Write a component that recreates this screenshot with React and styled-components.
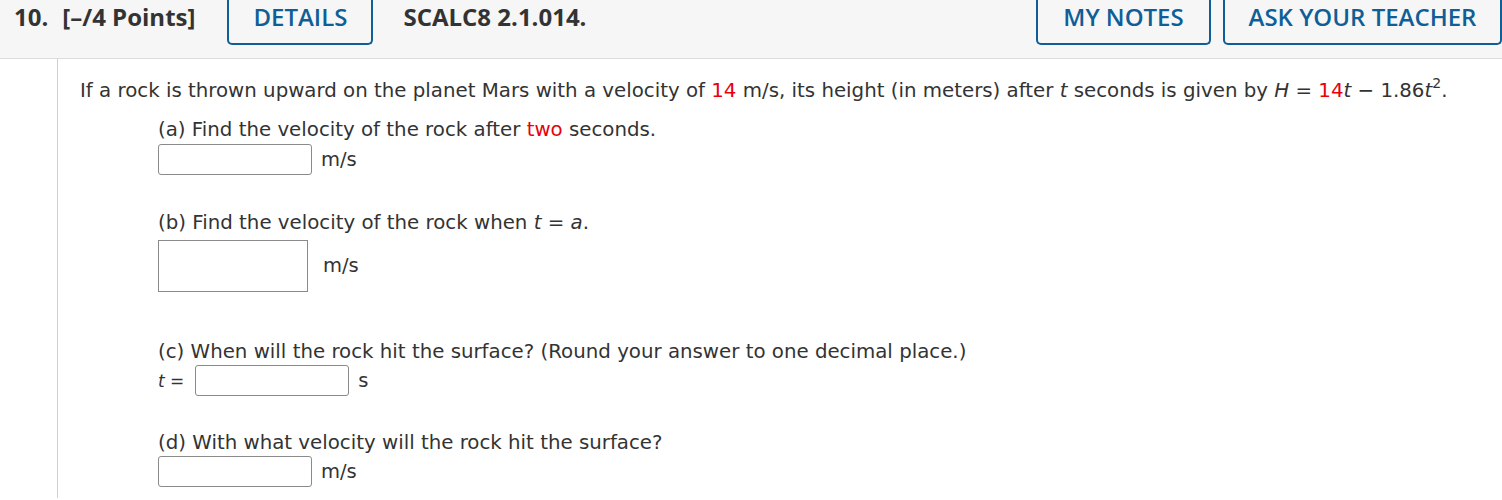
import React from "react";
import styled, { createGlobalStyle } from "styled-components";

const Global = createGlobalStyle`
  html, body { margin: 0; padding: 0; background: #fff; }
  body { font-family: "DejaVu Sans", Verdana, sans-serif; color: #333; }
`;

const Header = styled.header`
  display: flex;
  align-items: flex-start;
  height: 59px;
  background: #f6f6f6;
  border-bottom: 1px solid #dcdcdc;
  font-family: "Open Sans", "Liberation Sans", sans-serif;
  font-size: 24px;
  color: #333;
  box-sizing: border-box;
`;

const HeadText = styled.span`
  font-weight: ${(p) => p.$weight || 700};
  line-height: 34px;
  margin-left: ${(p) => p.$ml || 0}px;
  white-space: nowrap;
`;

const HeadButton = styled.div`
  box-sizing: border-box;
  width: ${(p) => p.$w}px;
  height: 45px;
  margin-left: ${(p) => p.$ml || 0}px;
  border: 2px solid #0f5f96;
  border-top: none;
  border-radius: 0 0 5px 5px;
  color: #0f5f96;
  font-weight: 600;
  text-align: center;
  line-height: 34px;
  white-space: nowrap;
`;

const Spacer = styled.div`
  flex: 1;
`;

const Body = styled.main`
  margin-left: 57px;
  border-left: 1px solid #d0d0d0;
  padding: 20px 0 11px 22px;
  font-size: 19.8px;
  line-height: 24px;
`;

const Para = styled.div`
  margin-top: ${(p) => p.$mt || 0}px;
  margin-left: ${(p) => p.$ml || 0}px;
  white-space: nowrap;
`;

const Red = styled.span`
  color: #e8000b;
`;

const I = styled.i`
  font-style: italic;
`;

const Sup = styled.sup`
  font-size: 14px;
  line-height: 0;
  vertical-align: 9px;
`;

const AnswerRow = styled.div`
  display: flex;
  align-items: center;
  gap: ${(p) => p.$gap || 9}px;
  margin-left: 78px;
  margin-top: ${(p) => p.$mt || 0}px;
`;

const Box = styled.div`
  box-sizing: border-box;
  width: ${(p) => p.$w || 154}px;
  height: ${(p) => p.$h || 31}px;
  border: 1px solid #8a8a8a;
  border-radius: ${(p) => (p.$square ? 0 : 3)}px;
  background: #fff;
`;

const Unit = styled.span`
  font-size: 19.5px;
  color: #333;
`;

const Label = styled.span`
  font-size: 17px;
  color: #333;
  margin-right: 2px;
`;

export default function App() {
  return (
    <>
      <Global />
      <Header>
        <HeadText $ml={14}>10.</HeadText>
        <HeadText $ml={14}>[–/4 Points]</HeadText>
        <HeadButton $w={146} $ml={32}>DETAILS</HeadButton>
        <HeadText $ml={30}>SCALC8 2.1.014.</HeadText>
        <Spacer />
        <HeadButton $w={175}>MY NOTES</HeadButton>
        <HeadButton $w={279} $ml={12}>ASK YOUR TEACHER</HeadButton>
      </Header>
      <Body>
        <Para>
          If a rock is thrown upward on the planet Mars with a velocity of <Red>14</Red> m/s, its height (in meters) after <I>t</I> seconds is given by <I>H</I> = <Red>14</Red><I>t</I> − 1.86<I>t</I><Sup>2</Sup>.
        </Para>
        <Para $ml={78} $mt={15}>
          (a) Find the velocity of the rock after <Red>two</Red> seconds.
        </Para>
        <AnswerRow $mt={2}>
          <Box />
          <Unit>m/s</Unit>
        </AnswerRow>
        <Para $ml={78} $mt={36}>
          (b) Find the velocity of the rock when <I>t</I> = <I>a</I>.
        </Para>
        <AnswerRow $mt={5} $gap={15}>
          <Box $w={150} $h={52} $square />
          <Unit>m/s</Unit>
        </AnswerRow>
        <Para $ml={78} $mt={48}>
          (c) When will the rock hit the surface? (Round your answer to one decimal place.)
        </Para>
        <AnswerRow $mt={1} $gap={9}>
          <Label><I>t</I> =</Label>
          <Box />
          <Unit>s</Unit>
        </AnswerRow>
        <Para $ml={78} $mt={35}>
          (d) With what velocity will the rock hit the surface?
        </Para>
        <AnswerRow $mt={1}>
          <Box />
          <Unit>m/s</Unit>
        </AnswerRow>
      </Body>
    </>
  );
}
